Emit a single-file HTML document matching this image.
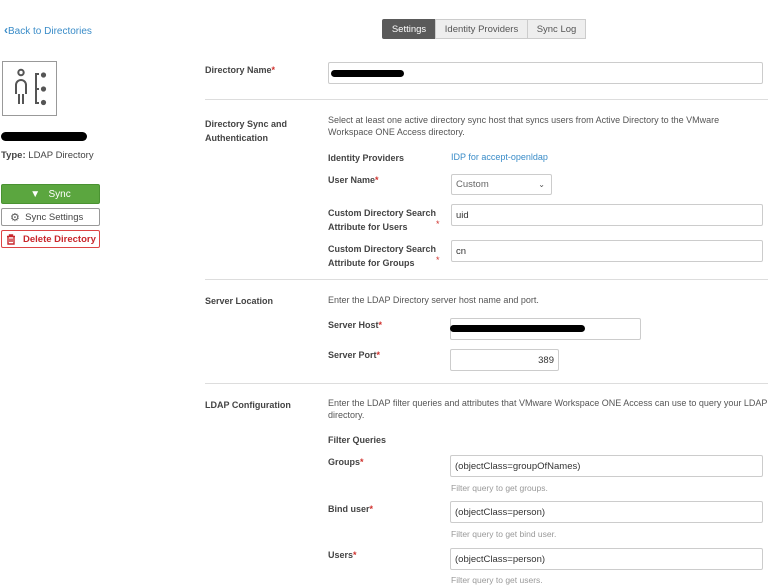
<!DOCTYPE html>
<html><head><style>
*{box-sizing:border-box;margin:0;padding:0}
body{width:768px;height:585px;background:#fff;font-family:"Liberation Sans",sans-serif;color:#333;position:relative;overflow:hidden;font-size:9px}
.a{position:absolute;white-space:nowrap}
.b{font-weight:bold;color:#444;font-size:9px}
.r{color:#d0312d}
.in{position:absolute;border:1px solid #ccc;border-radius:2px;background:#fff;font-size:9.5px;color:#333;padding-left:4px;display:flex;align-items:center}
.hr{position:absolute;left:205px;right:0;height:1px;background:#ddd}
.d{color:#555;font-size:9px;line-height:12px}
.h{color:#999;font-size:8.5px}
.blk{position:absolute;background:#000;border-radius:5px}
.btn{display:flex;align-items:center}
</style></head><body>
<div class="a" style="left:4px;top:23px;color:#3a8cc8;font-size:10px"><span style="font-size:12px;font-weight:bold">&#8249;</span>Back to Directories</div>
<div class="a" style="left:2px;top:61px;width:55px;height:55px;border:1px solid #999"></div>
<svg class="a" style="left:2px;top:61px" width="55" height="55" viewBox="0 0 55 55" fill="none" stroke="#555" stroke-width="2">
<circle cx="19" cy="11.5" r="2.7"/>
<path d="M14 33v-9a5 5 0 0 1 10 0v9M17 33v10M21 33v10"/>
<path d="M37 13h-3v29h3M34 28h3"/>
<circle cx="41.5" cy="14" r="1.6" fill="#555"/><circle cx="41.5" cy="28" r="1.6" fill="#555"/><circle cx="41.5" cy="41.5" r="1.6" fill="#555"/>
</svg>
<div class="blk" style="left:1px;top:132px;width:86px;height:9px"></div>
<div class="a" style="left:1px;top:150px;font-size:9.5px;color:#444"><b>Type:</b> LDAP Directory</div>
<div class="a btn" style="left:1px;top:184px;width:99px;height:20px;background:#5ba63f;border:1px solid #4a9232;border-radius:2px;color:#fff;font-size:10px;justify-content:center">&#9660;&nbsp;&nbsp;&nbsp;Sync</div>
<div class="a btn" style="left:1px;top:208px;width:99px;height:18px;border:1px solid #999;border-radius:2px;color:#444;font-size:9.5px;padding-left:8px"><span style="font-size:11px;color:#555">&#9881;</span>&nbsp;&nbsp;Sync Settings</div>
<div class="a btn" style="left:1px;top:230px;width:99px;height:18px;border:1px solid #d44;border-radius:2px;color:#c8262b;font-size:9.5px;font-weight:bold;padding-left:21px">Delete Directory</div>
<svg class="a" style="left:6px;top:234px" width="10" height="11" viewBox="0 0 10 11" fill="none" stroke="#c8262b" stroke-width="1.4"><path d="M1 2.5h8M3.5 2.5V1h3v1.5M2 2.5v7.5h6V2.5M4 4.5v3.5M6 4.5v3.5"/></svg>

<div class="a btn" style="left:382px;top:19px;width:54px;height:20px;background:#5a5a5a;color:#fff;font-size:9.5px;justify-content:center;border-radius:2px 0 0 2px">Settings</div>
<div class="a btn" style="left:435px;top:19px;width:93px;height:20px;background:#eee;border:1px solid #ccc;color:#555;font-size:9.5px;justify-content:center">Identity Providers</div>
<div class="a btn" style="left:527px;top:19px;width:59px;height:20px;background:#eee;border:1px solid #ccc;color:#555;font-size:9.5px;justify-content:center">Sync Log</div>

<div class="a b" style="left:205px;top:65px">Directory Name<span class="r">*</span></div>
<div class="in" style="left:328px;top:62px;width:435px;height:22px"></div>
<div class="blk" style="left:331px;top:70px;width:73px;height:7px"></div>
<div class="hr" style="top:99px"></div>

<div class="a b" style="left:205px;top:117px;line-height:14px">Directory Sync and<br>Authentication</div>
<div class="a d" style="left:328px;top:114px">Select at least one active directory sync host that syncs users from Active Directory to the VMware<br>Workspace ONE Access directory.</div>
<div class="a b" style="left:328px;top:153px">Identity Providers</div>
<div class="a" style="left:451px;top:152px;color:#3a8cc8;font-size:9px">IDP for accept-openldap</div>
<div class="a b" style="left:328px;top:175px">User Name<span class="r">*</span></div>
<div class="in" style="left:451px;top:174px;width:101px;height:21px;color:#666">Custom<span style="position:absolute;right:6px;font-size:8px;color:#555">&#8964;</span></div>
<div class="a b" style="left:328px;top:206px;line-height:14px">Custom Directory Search<br>Attribute for Users</div>
<div class="a r" style="left:436px;top:219px">*</div>
<div class="in" style="left:451px;top:204px;width:312px;height:22px">uid</div>
<div class="a b" style="left:328px;top:242px;line-height:14px">Custom Directory Search<br>Attribute for Groups</div>
<div class="a r" style="left:436px;top:255px">*</div>
<div class="in" style="left:451px;top:240px;width:312px;height:22px">cn</div>
<div class="hr" style="top:279px"></div>

<div class="a b" style="left:205px;top:296px">Server Location</div>
<div class="a d" style="left:328px;top:294px">Enter the LDAP Directory server host name and port.</div>
<div class="a b" style="left:328px;top:320px">Server Host<span class="r">*</span></div>
<div class="in" style="left:450px;top:318px;width:191px;height:22px"></div>
<div class="blk" style="left:450px;top:325px;width:135px;height:7px"></div>
<div class="a b" style="left:328px;top:350px">Server Port<span class="r">*</span></div>
<div class="in" style="left:450px;top:349px;width:109px;height:22px;justify-content:flex-end;padding-right:4px">389</div>
<div class="hr" style="top:383px"></div>

<div class="a b" style="left:205px;top:400px">LDAP Configuration</div>
<div class="a d" style="left:328px;top:397px">Enter the LDAP filter queries and attributes that VMware Workspace ONE Access can use to query your LDAP<br>directory.</div>
<div class="a b" style="left:328px;top:435px">Filter Queries</div>
<div class="a b" style="left:328px;top:457px">Groups<span class="r">*</span></div>
<div class="in" style="left:450px;top:455px;width:313px;height:22px">(objectClass=groupOfNames)</div>
<div class="a h" style="left:451px;top:483px">Filter query to get groups.</div>
<div class="a b" style="left:328px;top:504px">Bind user<span class="r">*</span></div>
<div class="in" style="left:450px;top:501px;width:313px;height:22px">(objectClass=person)</div>
<div class="a h" style="left:451px;top:529px">Filter query to get bind user.</div>
<div class="a b" style="left:328px;top:550px">Users<span class="r">*</span></div>
<div class="in" style="left:450px;top:548px;width:313px;height:22px">(objectClass=person)</div>
<div class="a h" style="left:451px;top:575px">Filter query to get users.</div>
</body></html>
